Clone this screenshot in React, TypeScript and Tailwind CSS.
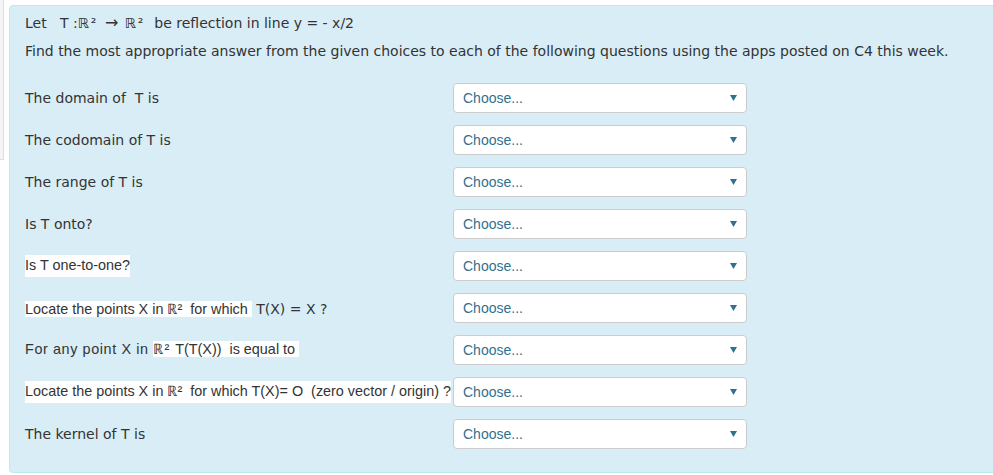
import React from "react";

const verdana = "font-['DejaVu_Sans',Verdana,sans-serif] text-[14px] text-[#333]";
const arial = "font-['Liberation_Sans',Arial,sans-serif] text-[14.4px] text-[#333]";

function Choose() {
  return (
    <div className="flex h-[30px] w-[294px] items-center justify-between rounded-[4px] border border-[#ccc] bg-white pl-[9px] pr-[8px] font-['Liberation_Sans',Arial,sans-serif] text-[14px] text-[#31708f]">
      <span>Choose...</span>
      <svg width="7" height="6" viewBox="0 0 7 6" className="mr-[1px]">
        <path d="M0 0H7L3.5 6Z" fill="#31708f" />
      </svg>
    </div>
  );
}

const R2 = ({ wide }: { wide?: boolean }) => (
  <span className={wide ? "tracking-[2px]" : ""}>ℝ²</span>
);

export default function App() {
  const rows: React.ReactNode[] = [
    <span className={verdana}>The domain of&nbsp; T is</span>,
    <span className={verdana}>The codomain of T is</span>,
    <span className={verdana}>The range of T is</span>,
    <span className={verdana}>Is T onto?</span>,
    <span className={`${arial} bg-white`}>Is T one-to-one?</span>,
    <span>
      <span className={`${arial} bg-white`}>
        Locate the points X in <R2 />&nbsp; for which&nbsp;
      </span>
      <span className={verdana}> T(X) = X ?</span>
    </span>,
    <span className={arial}>
      <span className="tracking-[0.6px]">For any point X in</span>{" "}
      <span className="bg-white">
        <R2 wide /> T(T(X))&nbsp; is equal to&nbsp;
      </span>
    </span>,
    <span className={`${arial} bg-white whitespace-nowrap`}>
      Locate the points X in <R2 />&nbsp; for which T(X)= O&nbsp; (zero vector / origin) ?
    </span>,
    <span className={verdana}>The kernel of T is</span>,
  ];

  return (
    <div className="flex h-[475px] w-[993px] overflow-hidden bg-white">
      <div className="h-[160px] w-[4px] shrink-0 border-r border-b border-[#ddd] bg-[#f5f5f5]" />
      <div className="ml-[5px] mt-[5px] h-[468px] w-[1000px] shrink-0 rounded-[4px] border border-[#bce8f1] bg-[#d9edf7] pl-[15px] pt-[3px]">
        <div className={`${verdana} leading-[28px]`}>
          Let&nbsp;&nbsp; T :<R2 wide /> <span className="px-[2px] text-[16px]">→</span> <R2 wide />&nbsp; be reflection in line y = - x/2
        </div>
        <div className={`${verdana} leading-[28px]`}>
          Find the most appropriate answer from the given choices to each of the following questions using the apps posted on C4 this week.
        </div>
        <div className="mt-[18px] grid grid-cols-[428px_294px] gap-y-[12px]">
          {rows.map((label, i) => (
            <React.Fragment key={i}>
              <div className="flex h-[30px] items-center whitespace-nowrap">{label}</div>
              <Choose />
            </React.Fragment>
          ))}
        </div>
      </div>
    </div>
  );
}
